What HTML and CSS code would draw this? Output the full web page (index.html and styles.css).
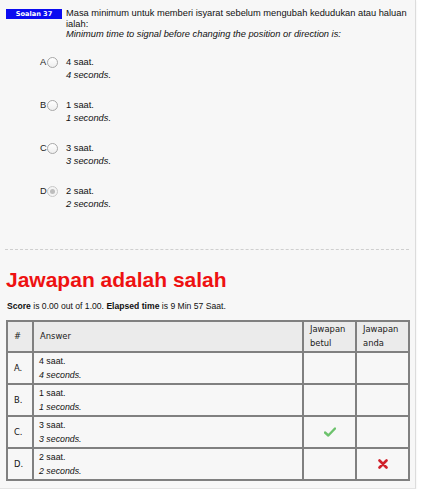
FILE: index.html
```html
<!DOCTYPE html>
<html>
<head>
<meta charset="utf-8">
<link rel="stylesheet" href="styles.css">
</head>
<body>
<div class="panel">
  <div class="question">
    <span class="qlabel">Soalan 37</span>
    <div class="qtext">Masa minimum untuk memberi isyarat sebelum mengubah kedudukan atau haluan ialah:<br><em>Minimum time to signal before changing the position or direction is:</em></div>
  </div>
  <div class="options">
    <div class="option"><span class="letter">A</span><span class="radio"></span><div class="otext">4 saat.<br><em>4 seconds.</em></div></div>
    <div class="option"><span class="letter">B</span><span class="radio"></span><div class="otext">1 saat.<br><em>1 seconds.</em></div></div>
    <div class="option"><span class="letter">C</span><span class="radio"></span><div class="otext">3 saat.<br><em>3 seconds.</em></div></div>
    <div class="option"><span class="letter">D</span><span class="radio checked"></span><div class="otext">2 saat.<br><em>2 seconds.</em></div></div>
  </div>
  <div class="divider"></div>
  <h1 class="result">Jawapan adalah salah</h1>
  <p class="score"><b>Score</b> is 0.00 out of 1.00. <b>Elapsed time</b> is 9 Min 57 Saat.</p>
  <table class="answers">
    <colgroup><col class="c1"><col class="c2"><col class="c3"><col class="c4"></colgroup>
    <thead>
      <tr><th>#</th><th>Answer</th><th>Jawapan betul</th><th>Jawapan anda</th></tr>
    </thead>
    <tbody>
      <tr><td class="lbl">A.</td><td class="ans">4 saat.<br><em>4 seconds.</em></td><td></td><td></td></tr>
      <tr><td class="lbl">B.</td><td class="ans">1 saat.<br><em>1 seconds.</em></td><td></td><td></td></tr>
      <tr><td class="lbl">C.</td><td class="ans">3 saat.<br><em>3 seconds.</em></td><td class="mark"><svg width="12" height="10" viewBox="0 0 12 10"><path d="M1 5.5 L4.3 8.5 L11 1.5" fill="none" stroke="#6cc26c" stroke-width="2.4" stroke-linecap="round" stroke-linejoin="round"/></svg></td><td></td></tr>
      <tr><td class="lbl">D.</td><td class="ans">2 saat.<br><em>2 seconds.</em></td><td></td><td class="mark"><svg width="10" height="10" viewBox="0 0 10 10"><path d="M1.5 1.5 L8.5 8.5 M8.5 1.5 L1.5 8.5" fill="none" stroke="#d0212b" stroke-width="2.6" stroke-linecap="round"/></svg></td></tr>
    </tbody>
  </table>
</div>
</body>
</html>
```
FILE: styles.css
```css
html, body {
  margin: 0;
  padding: 0;
  background: #ffffff;
}
body {
  font-family: "Liberation Sans", Arial, sans-serif;
  color: #111111;
}
.panel {
  width: 416px;
  box-sizing: border-box;
  background: #f7f7f7;
  border-right: 1px solid #dcdcdc;
  border-bottom: 1px solid #e4e4e4;
  box-shadow: 0 1px 2px rgba(0,0,0,0.08);
  padding: 8px 0 7px 0;
}
.question {
  display: flex;
  align-items: flex-start;
  padding-left: 6px;
}
.qlabel {
  flex: none;
  width: 56px;
  height: 10px;
  margin-top: 1px;
  background: #0b0bf0;
  color: #ffffff;
  font-family: "DejaVu Sans", sans-serif;
  font-weight: bold;
  font-size: 6.6px;
  line-height: 10px;
  text-align: center;
}
.qtext {
  margin-left: 4px;
  width: 343px;
  font-size: 9.3px;
  line-height: 10.5px;
}
.options {
  margin-top: 16px;
  padding-left: 40px;
  display: flex;
  flex-direction: column;
  gap: 17px;
}
.option {
  display: flex;
  align-items: flex-start;
}
.letter {
  width: 7px;
  font-size: 9.3px;
  line-height: 13px;
  color: #222;
}
.radio {
  flex: none;
  width: 11px;
  height: 11px;
  box-sizing: border-box;
  border: 1px solid #a8a8a8;
  border-radius: 50%;
  background: linear-gradient(#ffffff, #eeeeee);
  margin-top: 1px;
  position: relative;
}
.radio.checked {
  border-color: #c8c8c8;
  background: #f4f4f4;
}
.radio.checked::after {
  content: "";
  position: absolute;
  left: 2px;
  top: 2px;
  width: 5px;
  height: 5px;
  border-radius: 50%;
  background: #bdbdbd;
}
.otext {
  margin-left: 8px;
  font-size: 9.3px;
  line-height: 13px;
}
.divider {
  margin: 38px 6px 0 5px;
  border-top: 1px dashed #cfcfcf;
}
.result {
  margin: 18px 0 0 6px;
  font-size: 21px;
  line-height: 24px;
  font-weight: bold;
  color: #ee1111;
}
.score {
  margin: 8px 0 0 7px;
  font-size: 8.6px;
  line-height: 12px;
}
.answers {
  margin: 8px 0 0 6px;
  border-collapse: collapse;
  table-layout: fixed;
  width: 400px;
  border: 2px solid #808080;
}
.c1 { width: 26px; }
.c2 { width: 270px; }
.c3 { width: 53px; }
.c4 { width: 53px; }
.answers th, .answers td {
  border: 2px solid #808080;
  padding: 0 6px;
  text-align: left;
  vertical-align: middle;
}
.answers th {
  background: #ebebeb;
  font-family: "DejaVu Sans", sans-serif;
  font-weight: normal;
  font-size: 8.4px;
  line-height: 14px;
  height: 29px;
  color: #1a1a1a;
}
.answers td {
  height: 30px;
  font-size: 8.8px;
  line-height: 14px;
}
.answers td.lbl {
  font-family: "DejaVu Sans", sans-serif;
  font-size: 8.4px;
}
.answers td.ans {
  padding-left: 5px;
}
.answers td.mark {
  text-align: center;
  padding: 0;
}
.answers td.mark svg {
  display: inline-block;
  vertical-align: middle;
}
```
